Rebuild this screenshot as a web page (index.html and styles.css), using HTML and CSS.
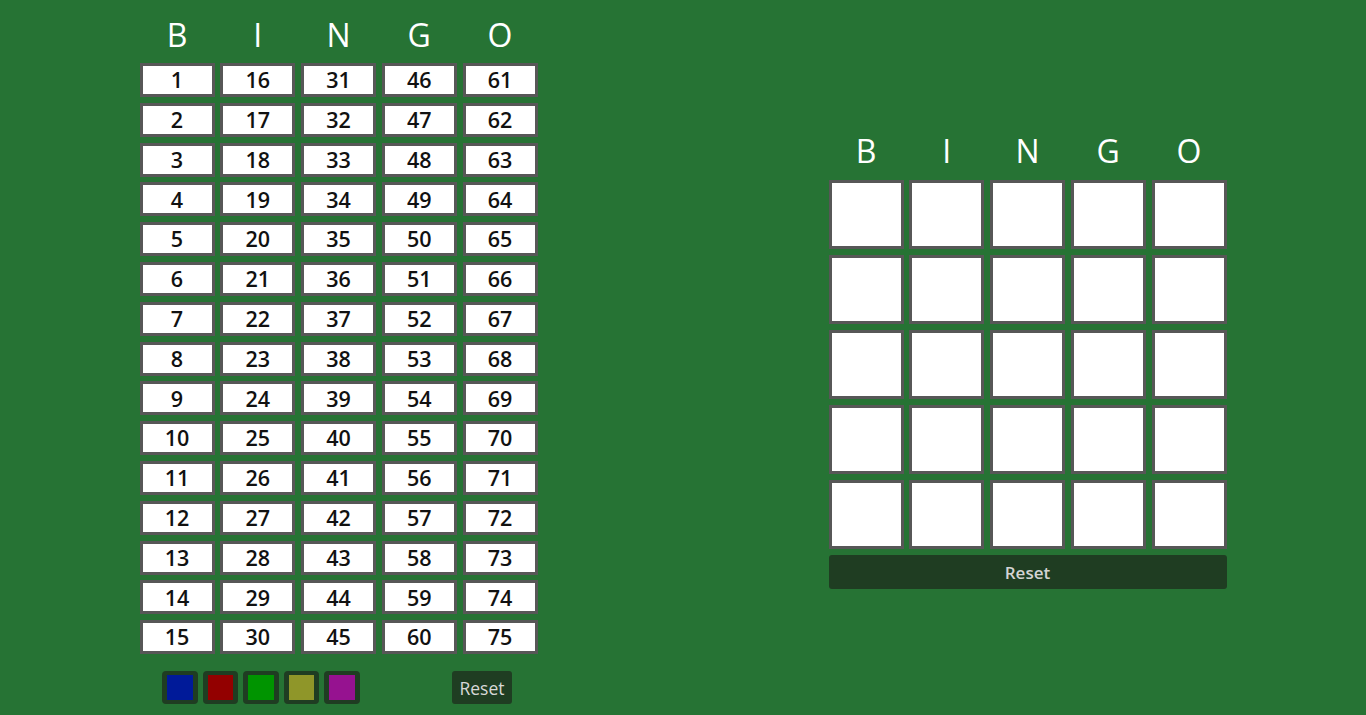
FILE: index.html
```html
<!DOCTYPE html>
<html>
<head>
<meta charset="utf-8">
<link rel="stylesheet" href="styles.css">
</head>
<body>
<div class="page">
  <div class="caller">
    <div class="letters"><span>B</span><span>I</span><span>N</span><span>G</span><span>O</span></div>
    <div class="numbers" id="numbers"></div>
    <div class="footer">
      <div class="swatches">
        <div class="swatch"><div class="chip blue"></div></div>
        <div class="swatch"><div class="chip red"></div></div>
        <div class="swatch"><div class="chip green"></div></div>
        <div class="swatch"><div class="chip olive"></div></div>
        <div class="swatch"><div class="chip purple"></div></div>
      </div>
      <button class="reset-small">Reset</button>
    </div>
  </div>
  <div class="card">
    <div class="letters"><span>B</span><span>I</span><span>N</span><span>G</span><span>O</span></div>
    <div class="squares">
      <div class="sq"></div><div class="sq"></div><div class="sq"></div><div class="sq"></div><div class="sq"></div>
      <div class="sq"></div><div class="sq"></div><div class="sq"></div><div class="sq"></div><div class="sq"></div>
      <div class="sq"></div><div class="sq"></div><div class="sq"></div><div class="sq"></div><div class="sq"></div>
      <div class="sq"></div><div class="sq"></div><div class="sq"></div><div class="sq"></div><div class="sq"></div>
      <div class="sq"></div><div class="sq"></div><div class="sq"></div><div class="sq"></div><div class="sq"></div>
    </div>
    <button class="reset-wide">Reset</button>
  </div>
</div>
<script>
  var n = document.getElementById('numbers');
  for (var r = 1; r <= 15; r++) {
    for (var c = 0; c < 5; c++) {
      var d = document.createElement('div');
      d.className = 'num';
      d.textContent = r + c * 15;
      n.appendChild(d);
    }
  }
</script>
</body>
</html>
```

FILE: styles.css
```css
html, body {
  margin: 0;
  padding: 0;
  background: #267334;
  font-family: "Open Sans", "Noto Sans", sans-serif;
}
.page {
  display: flex;
  align-items: flex-start;
  height: 715px;
  overflow: hidden;
}
.caller {
  padding-top: 15px;
  padding-left: 139.5px;
  width: 398px;
}
.letters {
  display: grid;
  grid-template-columns: repeat(5, 75px);
  column-gap: 5.75px;
  height: 40px;
  line-height: 40px;
  font-size: 32px;
  color: #fff;
  text-align: center;
  margin-bottom: 8px;
}
.numbers {
  display: grid;
  grid-template-columns: repeat(5, 75px);
  grid-auto-rows: 34px;
  column-gap: 5.75px;
  row-gap: 5.8px;
}
.num {
  box-sizing: border-box;
  background: #fff;
  border: 3px solid #575757;
  font-size: 21.5px;
  font-weight: 600;
  color: #111;
  display: flex;
  align-items: center;
  justify-content: center;
  line-height: 1;
}
.footer {
  display: flex;
  align-items: flex-start;
  margin-top: 17px;
  padding-left: 22.5px;
}
.swatches {
  display: flex;
  gap: 5px;
}
.swatch {
  box-sizing: border-box;
  width: 35.5px;
  height: 33px;
  background: #1f3d22;
  border-radius: 4px;
  padding: 4px 5px;
}
.chip {
  width: 100%;
  height: 100%;
}
.blue { background: #001a99; }
.red { background: #930000; }
.green { background: #009400; }
.olive { background: #8f9629; }
.purple { background: #961290; }
.reset-small {
  margin-left: 92.5px;
  width: 60px;
  height: 33px;
  border: none;
  border-radius: 3px;
  background: #1f3d22;
  color: #d8d8d8;
  font-family: "Open Sans", "Noto Sans", sans-serif;
  font-size: 17.5px;
  padding: 0;
}
.card {
  margin-left: 291px;
  padding-top: 131px;
  width: 398px;
}
.card .letters {
  margin-bottom: 9px;
}
.squares {
  display: grid;
  grid-template-columns: repeat(5, 75px);
  grid-auto-rows: 69px;
  column-gap: 5.75px;
  row-gap: 6px;
}
.sq {
  box-sizing: border-box;
  background: #fff;
  border: 3px solid #575757;
}
.reset-wide {
  display: block;
  margin-top: 6px;
  width: 398px;
  height: 34px;
  border: none;
  border-radius: 3px;
  background: #1f3d22;
  color: #d4d4d4;
  font-family: "Open Sans", "Noto Sans", sans-serif;
  font-size: 17px;
  font-weight: 600;
  padding: 0;
}
```
